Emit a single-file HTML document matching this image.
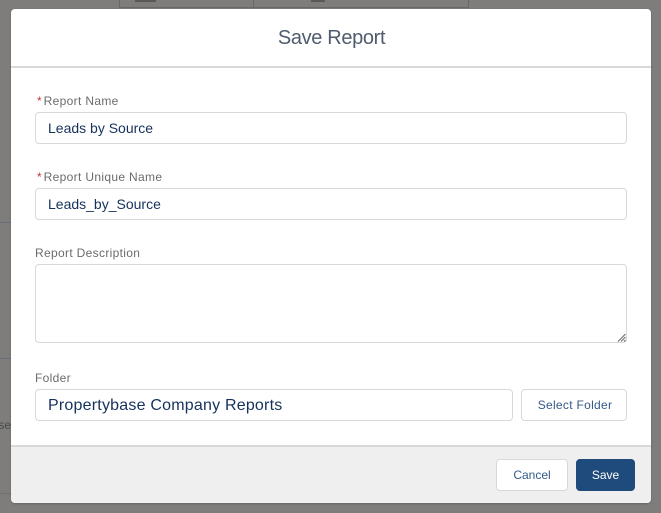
<!DOCTYPE html>
<html>
<head>
<meta charset="utf-8">
<style>
html,body{margin:0;padding:0;}
body{width:661px;height:513px;overflow:hidden;background:#7e7d7c;position:relative;font-family:"Liberation Sans",sans-serif;}
.a{position:absolute;box-sizing:border-box;}
.t{position:absolute;white-space:nowrap;}
.input{position:absolute;box-sizing:border-box;background:#fff;border:1px solid #d8d8d8;border-radius:4px;}
.label{position:absolute;white-space:nowrap;font-size:12px;line-height:14px;color:#6b6b6b;letter-spacing:.33px;}
.req{color:#c23934;margin-right:2px;letter-spacing:0;}
.val{position:absolute;left:48px;white-space:nowrap;color:#16325c;}
.btn{position:absolute;box-sizing:border-box;border:1px solid #d8d8d8;border-radius:4px;background:#fff;color:#33598a;font-size:12px;text-align:center;}
</style>
</head>
<body>
<!-- backdrop detail -->
<div class="a" style="left:119px;top:0;width:350px;height:8px;border-left:1px solid #696866;border-right:1px solid #696866;border-bottom:1px solid #696866;"></div>
<div class="a" style="left:253px;top:0;width:1px;height:8px;background:#696866;"></div>
<div class="a" style="left:135px;top:0;width:21px;height:2px;background:#5a5958;"></div>
<div class="a" style="left:311px;top:0;width:14px;height:2px;background:#5a5958;"></div>
<div class="a" style="left:0;top:222px;width:11px;height:1px;background:#6b6f78;"></div>
<div class="a" style="left:0;top:358px;width:11px;height:1px;background:#6b6f78;"></div>
<div class="a" style="left:0;top:493px;width:11px;height:1px;background:#727170;"></div>
<div class="t" style="left:0;top:418px;width:11px;overflow:hidden;font-size:12px;line-height:14px;color:#4a4a4a;direction:rtl;">se</div>

<!-- modal -->
<div class="a" style="left:11px;top:9px;width:640px;height:494px;background:#fff;border-radius:4px;overflow:hidden;box-shadow:0 1px 2px rgba(0,0,0,.2);">
  <div class="a" style="left:0;top:57px;width:640px;height:2px;background:#d8d8d8;"></div>
  <div class="a" style="left:0;top:436px;width:640px;height:58px;background:#efefef;border-top:2px solid #d8d8d8;"></div>
</div>

<div class="t" style="left:0;width:661px;top:26px;text-align:center;padding-left:2px;box-sizing:border-box;font-size:20px;line-height:24px;color:#4f5c6e;letter-spacing:-.35px;">Save Report</div>

<div class="label" style="left:37px;top:94px;"><span class="req">*</span>Report Name</div>
<div class="input" style="left:35px;top:112px;width:592px;height:32px;"></div>
<div class="val" style="top:120px;font-size:14px;line-height:17px;">Leads by Source</div>

<div class="label" style="left:37px;top:170px;"><span class="req">*</span>Report Unique Name</div>
<div class="input" style="left:35px;top:188px;width:592px;height:32px;"></div>
<div class="val" style="top:196px;font-size:14px;line-height:17px;">Leads_by_Source</div>

<div class="label" style="left:35px;top:246px;">Report Description</div>
<div class="input" style="left:35px;top:264px;width:592px;height:79px;"></div>
<svg class="a" style="left:617px;top:333px;" width="10" height="9" viewBox="0 0 10 9"><path d="M1 8.5L8.5 1M4 8.5L8.5 4M7 8.5L8.5 7" stroke="#666" stroke-width="1" fill="none"/></svg>

<div class="label" style="left:35px;top:371px;">Folder</div>
<div class="input" style="left:35px;top:389px;width:478px;height:32px;"></div>
<div class="val" style="top:397px;font-size:16px;line-height:18px;letter-spacing:.21px;">Propertybase Company Reports</div>
<div class="btn" style="left:521px;top:389px;width:106px;height:32px;line-height:30px;letter-spacing:.3px;padding-left:2px;">Select Folder</div>

<div class="btn" style="left:496px;top:459px;width:72px;height:32px;line-height:30px;">Cancel</div>
<div class="btn" style="left:576px;top:459px;width:59px;height:32px;line-height:30px;background:#1f4b7c;border-color:#1f4b7c;color:#fff;">Save</div>
</body>
</html>
